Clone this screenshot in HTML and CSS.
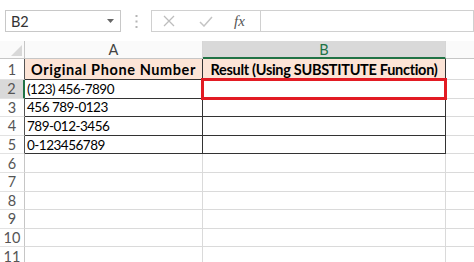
FILE: index.html
```html
<!DOCTYPE html>
<html lang="en">

<head>
    <meta charset="UTF-8">
    <meta name="viewport" content="width=device-width, initial-scale=1.0">
    <title>SUBSTITUTE phone numbers</title>
    <link rel="stylesheet" href="styles.css">
</head>

<body>
    <div class="toolbar">
        <div class="name-box">
            <span>B2</span>
            <svg class="drop" width="7" height="4" viewBox="0 0 7 4"><path d="M0 0 L7 0 L3.5 4 Z" fill="#666" /></svg>
        </div>
        <div class="dots">
            <svg width="3" height="13" viewBox="0 0 3 13">
                <rect x="0.5" y="0" width="2" height="2" fill="#b5b5b5" />
                <rect x="0.5" y="5.5" width="2" height="2" fill="#b5b5b5" />
                <rect x="0.5" y="11" width="2" height="2" fill="#b5b5b5" />
            </svg>
        </div>
        <div class="formula-bar">
            <div class="formula-buttons">
                <svg class="btn-x" width="12" height="12" viewBox="0 0 12 12">
                    <path d="M1 1 L11 11 M11 1 L1 11" stroke="#bdbdbd" stroke-width="1.3" fill="none" />
                </svg>
                <svg class="btn-ok" width="14" height="11" viewBox="0 0 14 11">
                    <path d="M1 6 L5 10 L13 1" stroke="#c4c4c4" stroke-width="1.5" fill="none" />
                </svg>
                <span class="fx">fx</span>
            </div>
            <div class="formula-input"></div>
        </div>
    </div>

    <!-- sheet grid: row header + columns A, B, C -->
    <div class="sheet">
        <div class="corner"><span class="corner-tri"></span></div>
        <div class="col-head">A</div>
        <div class="col-head selected">B</div>
        <div class="col-head"></div>

        <div class="row-head framed">1</div>
        <div class="cell title title-a framed">Original Phone Number</div>
        <div class="cell title title-b framed">Result (Using SUBSTITUTE Function)</div>
        <div class="cell"></div>

        <div class="row-head selected">2</div>
        <div class="cell framed">(123) 456-7890</div>
        <div class="cell framed active"><span class="highlight"></span></div>
        <div class="cell"></div>

        <div class="row-head framed">3</div>
        <div class="cell framed">456 789-0123</div>
        <div class="cell framed"></div>
        <div class="cell"></div>

        <div class="row-head framed">4</div>
        <div class="cell framed">789-012-3456</div>
        <div class="cell framed"></div>
        <div class="cell"></div>

        <div class="row-head framed">5</div>
        <div class="cell framed">0-123456789</div>
        <div class="cell framed"></div>
        <div class="cell"></div>

        <div class="row-head">6</div>
        <div class="cell"></div>
        <div class="cell"></div>
        <div class="cell"></div>

        <div class="row-head">7</div>
        <div class="cell"></div>
        <div class="cell"></div>
        <div class="cell"></div>

        <div class="row-head">8</div>
        <div class="cell"></div>
        <div class="cell"></div>
        <div class="cell"></div>

        <div class="row-head">9</div>
        <div class="cell"></div>
        <div class="cell"></div>
        <div class="cell"></div>

        <div class="row-head">10</div>
        <div class="cell"></div>
        <div class="cell"></div>
        <div class="cell"></div>

        <div class="row-head">11</div>
        <div class="cell"></div>
        <div class="cell"></div>
        <div class="cell"></div>
    </div>
</body>

</html>
```

FILE: styles.css
```css
*,
*:before,
*:after {
    box-sizing: border-box;
}

html,
body {
    margin: 0;
    height: 100%;
    overflow: hidden;
}

body {
    background-color: #ffffff;
    font-family: Lato, "Open Sans", sans-serif;
    color: #000;
}

/* formula bar strip */

.toolbar {
    height: 41px;
    padding: 10px 0 0 5px;
    display: flex;
    align-items: flex-start;
}

.name-box {
    width: 116px;
    height: 22px;
    border: 1px solid #c8c8c8;
    display: flex;
    align-items: center;
    justify-content: space-between;
    padding: 0 6px 0 5px;
    font-size: 14.5px;
    color: #333;
}

.dots {
    width: 30px;
    height: 22px;
    display: flex;
    align-items: center;
    justify-content: center;
}

.formula-bar {
    flex: 1;
    height: 22px;
    display: flex;
}

.formula-buttons {
    width: 109px;
    border: 1px solid #d0d0d0;
    border-right: none;
    display: flex;
    align-items: center;
}

.btn-x {
    margin-left: 11px;
}

.btn-ok {
    margin-left: 24px;
}

.fx {
    margin-left: 21px;
    font-family: "Liberation Serif", serif;
    font-style: italic;
    font-size: 15px;
    color: #555;
}

.formula-input {
    flex: 1;
    border: 1px solid #d0d0d0;
}

/* grid */

.sheet {
    display: grid;
    grid-template-columns: 25px 178px 243px 40px;
    grid-template-rows: 18px 21px repeat(10, 18.6px);
}

.sheet > div {
    border-right: 1px solid #dadada;
    border-bottom: 1px solid #dadada;
    display: flex;
    align-items: center;
    white-space: nowrap;
    overflow: visible;
}

.corner {
    position: relative;
    background-color: #fafafa;
    border-bottom-color: #c6c6c6 !important;
    border-right-color: #c6c6c6 !important;
}

.corner-tri {
    position: absolute;
    right: 2px;
    bottom: 2px;
    width: 0;
    height: 0;
    border-left: 11px solid transparent;
    border-bottom: 11px solid #d8d8d8;
}

.col-head {
    justify-content: center;
    background-color: #fafafa;
    font-size: 14.5px;
    color: #444;
    border-bottom-color: #c6c6c6 !important;
    border-right-color: #d6d6d6 !important;
}

.col-head.selected {
    background-color: #d9d9d9;
    color: #217346;
    border-bottom: 2px solid #217346 !important;
}

.row-head {
    justify-content: center;
    font-size: 14.5px;
    color: #555;
    border-right-color: #c6c6c6 !important;
    border-bottom-color: #e2e2e2 !important;
}

.row-head.framed {
    border-right-color: #555 !important;
}

.row-head.selected {
    background-color: #d9d9d9;
    border-right: 2px solid #217346 !important;
}

.cell {
    font-size: 13.5px;
    letter-spacing: -0.5px;
    padding-left: 2px;
}

.cell.framed {
    border-right-color: #333 !important;
    border-bottom-color: #333 !important;
}

.cell.title {
    justify-content: center;
    background-color: #fce4d6;
    font-weight: bold;
    font-size: 14.5px;
    padding-left: 0;
}

.title-a {
    letter-spacing: 0.6px;
}

.title-b {
    letter-spacing: -0.3px;
}

.cell.active {
    position: relative;
}

/* red highlight around B2 */
.highlight {
    position: absolute;
    top: -2px;
    left: -2px;
    right: -2px;
    bottom: -2px;
    border: 3px solid #e21b23;
}
```
